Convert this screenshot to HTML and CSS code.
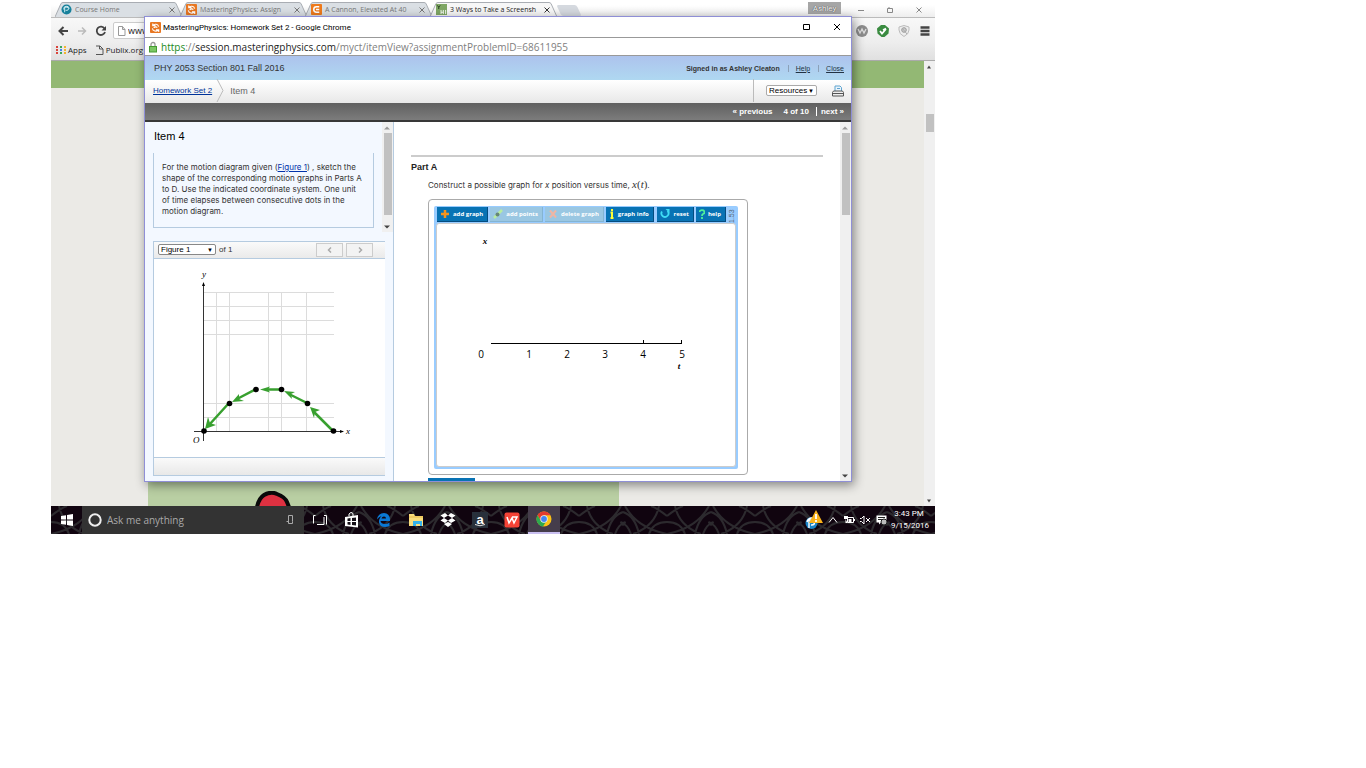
FILE: index.html
```html
<!DOCTYPE html>
<html lang="en">
<head>
<meta charset="utf-8">
<title>MasteringPhysics: Homework Set 2</title>
<link rel="stylesheet" href="styles.css">
</head>
<body>
<main class="desktop">
  <div class="stage">
    <section class="browser" aria-label="Browser">
      <header class="tabstrip">
        <div class="tabs">
          <div class="tab">
            <svg class="tab-shape" viewBox="0 0 127 15" preserveAspectRatio="none"><path d="M0 15 6 1.5Q7 .5 8 .5H119Q120 .5 121 1.5L127 15"/></svg>
            <svg class="fav" viewBox="0 0 12 12"><circle cx="6" cy="6" r="5.500" fill="#16809b"/><path d="M4 9V3.500h2.500a1.700 1.700 0 0 1 0 3.400H5M3 6a3 3 0 0 1 6-1" fill="none" stroke="#d8f1f5"/></svg>
            <span class="tab-title">Course Home</span><button class="x" aria-label="Close tab"><svg viewBox="0 0 6 6"><path d="m.5.500 5 5m0-5-5 5"/></svg></button>
          </div>
          <div class="tab">
            <svg class="tab-shape" viewBox="0 0 127 15" preserveAspectRatio="none"><path d="M0 15 6 1.500Q7 .5 8 .5H119Q120 .5 121 1.500L127 15"/></svg>
            <svg class="fav" viewBox="0 0 12 12"><rect width="12" height="12" rx="1" fill="#e87722"/><path d="M9.500 5A3.700 3.700 0 0 0 3 4M2.500 7A3.700 3.700 0 0 0 9 8.500M3 1.500V4h3M9.500 11V8.500h-3M4 6.500q2-2 4-.500" fill="none" stroke="#fff" stroke-width="1.200"/></svg>
            <span class="tab-title">MasteringPhysics: Assign</span><button class="x" aria-label="Close tab"><svg viewBox="0 0 6 6"><path d="m.5.500 5 5m0-5-5 5"/></svg></button>
          </div>
          <div class="tab">
            <svg class="tab-shape" viewBox="0 0 127 15" preserveAspectRatio="none"><path d="M0 15 6 1.500Q7 .5 8 .5H119Q120 .5 121 1.500L127 15"/></svg>
            <svg class="fav" viewBox="0 0 12 12"><rect width="12" height="12" rx="1" fill="#ee7a1c"/><path d="M9 3H6a3 3 0 0 0 0 6h3M5.500 6H9" fill="none" stroke="#fff" stroke-width="1.600"/></svg>
            <span class="tab-title">A Cannon, Elevated At 40</span><button class="x" aria-label="Close tab"><svg viewBox="0 0 6 6"><path d="m.5.500 5 5m0-5-5 5"/></svg></button>
          </div>
          <div class="tab active">
            <svg class="tab-shape" viewBox="0 0 127 15" preserveAspectRatio="none"><path d="M0 15 6 1.500Q7 .5 8 .5H119Q120 .5 121 1.500L127 15"/></svg>
            <svg class="fav" viewBox="0 0 12 12"><rect width="12" height="12" fill="#7fa765"/><path d="m1.500 1.500 1.500 2v2m1.500-4L3 3.500" stroke="#20351a" fill="none"/><path d="M5.500 11V6.500m2.500 4.500V6.500M5.500 9H8m2.500 2V6.500" stroke="#fff" fill="none"/></svg>
            <span class="tab-title">3 Ways to Take a Screensh</span><button class="x" aria-label="Close tab"><svg viewBox="0 0 6 6"><path d="m.5.500 5 5m0-5-5 5"/></svg></button>
          </div>
          <button class="newtab" aria-label="New tab"></button>
        </div>
        <button class="profile">Ashley</button>
        <div class="winbtns">
          <button aria-label="Minimize"><svg viewBox="0 0 8 8"><path d="M1 4.500h6"/></svg></button>
          <button aria-label="Restore"><svg viewBox="0 0 8 8"><path d="M1.500 2.500h5v4h-5zM3 1v1"/></svg></button>
          <button aria-label="Close"><svg viewBox="0 0 8 8"><path d="m1.500 1.500 5 5m0-5-5 5"/></svg></button>
        </div>
      </header>
      <nav class="toolbar">
        <button aria-label="Back"><svg viewBox="0 0 12 12"><path d="M11 6H3m3.500-4L2.500 6l4 4" fill="none" stroke="#444" stroke-width="2"/></svg></button>
        <button aria-label="Forward"><svg viewBox="0 0 12 12"><path d="M2 6h7M6 2.500 9.500 6 6 9.500" fill="none" stroke="#bbb" stroke-width="1.500"/></svg></button>
        <button aria-label="Reload"><svg viewBox="0 0 12 12"><path d="M9.500 3.500A4.200 4.200 0 1 0 10 7" fill="none" stroke="#444" stroke-width="1.800"/><path d="M11 1v4.500H6.500z" fill="#444"/></svg></button>
        <label class="omnibox"><svg viewBox="0 0 9 12"><path d="M1.500 1.500h4l2.500 3v6H1.500zM5.500 1.500v3H8" fill="#fff" stroke="#999"/></svg><input type="text" value="www.wikihow.com" aria-label="Address"></label>
        <button aria-label="Extension W"><svg viewBox="0 0 12 12"><circle cx="6" cy="6" r="6" fill="#8c8c8c"/><path d="m2 4 2 4 2-4 2 4 2-4" fill="none" stroke="#ddd" stroke-width="1.300"/></svg></button>
        <button aria-label="Site safety"><svg viewBox="0 0 12 12"><path d="M4 0h4l4 3.500-.5 5L7.500 12h-3L.5 8.500 0 3.500z" fill="#3a8b40"/><path d="m3 6 2 2.500L9 4M6 5l3-1.500" fill="none" stroke="#fff" stroke-width="1.800"/></svg></button>
        <button aria-label="Shield"><svg viewBox="0 0 12 12"><path d="M6 .5 11 2v3q0 4-5 6.500Q1 9 1 5V2z" fill="#eee" stroke="#bbb"/><circle cx="6" cy="5" r="2.300" fill="#ccc" stroke="#999"/><path d="m4 3 5 6" stroke="#aaa"/></svg></button>
        <button aria-label="Menu"><svg viewBox="0 0 12 12"><path d="M1.500 2.500h9m-9 3.500h9m-9 3.500h9" stroke="#444" stroke-width="2.300"/></svg></button>
      </nav>
      <nav class="bookmarks">
        <a href="#"><svg viewBox="0 0 10 10"><path d="M0 1h2v2H0zm0 3h2v2H0zm0 3h2v2H0z" fill="#d9443b"/><path d="M4 1h2v2H4zm0 6h2v2H4z" fill="#3aa757"/><path d="M4 4h2v2H4z" fill="#4285f4"/><path d="M8 1h2v2H8zm0 3h2v2H8zm0 3h2v2H8z" fill="#f4b32f"/></svg>Apps</a>
        <a href="#"><svg viewBox="0 0 10 10"><path d="M2 1h4l3 3v5.500H2M5.500 1v3H9" fill="none" stroke="#555"/></svg>Publix.org</a>
      </nav>
      <div class="page">
        <div class="page-body">
          <div class="band"></div>
          <div class="article"><svg viewBox="0 0 36 15"><path d="M2 16Q4 7 9 4q7-4 13-1 8 3 10 8l2 5" fill="#de3141" stroke="#0a0a0a" stroke-width="4"/></svg></div>
        </div>
        <div class="sbar tall"><svg class="up" viewBox="0 0 10 10"><path d="m3 7 2-3 2 3z"/></svg><i></i><svg viewBox="0 0 10 10"><path d="m3 4 2 3 2-3z"/></svg></div>
      </div>
    </section>

    <section class="popup" aria-label="MasteringPhysics">
      <header class="titlebar">
        <svg class="fav" viewBox="0 0 12 12"><rect width="12" height="12" rx="1" fill="#e87722"/><path d="M9.500 5A3.700 3.700 0 0 0 3 4M2.500 7A3.700 3.700 0 0 0 9 8.500M3 1.500V4h3M9.500 11V8.500h-3M4 6.500q2-2 4-.500" fill="none" stroke="#fff" stroke-width="1.200"/></svg>
        <h1>MasteringPhysics: Homework Set 2 - Google Chrome</h1>
        <button aria-label="Maximize"><svg viewBox="0 0 8 8"><path d="M.5 1.500h6v5h-6z"/></svg></button>
        <button aria-label="Close"><svg viewBox="0 0 8 8"><path d="m1 1 6 6m0-6L1 7"/></svg></button>
      </header>
      <div class="urlbar">
        <svg viewBox="0 0 8 12"><path d="M2 6V3.500a2 2 0 0 1 4 0V6" fill="none" stroke="#999" stroke-width="1.300"/><rect x=".5" y="5.500" width="7" height="5.500" fill="#7cc764" stroke="#459b32"/></svg>
        <span><b>https</b>://<em>session.masteringphysics.com</em>/myct/itemView?assignmentProblemID=68611955</span>
      </div>
      <div class="course">
        <span class="course-name">PHY 2053 Section 801 Fall 2016</span>
        <span class="user">Signed in as Ashley Cleaton</span><a href="#">Help</a><a href="#">Close</a>
      </div>
      <nav class="crumbs">
        <a href="#">Homework Set 2</a>
        <svg viewBox="0 0 8 23" class="chev"><path d="M1 0 7 11.500 1 23"/></svg>
        <span class="here">Item 4</span>
        <div class="tools">
          <span class="pick"><select aria-label="Resources"><option>Resources</option></select></span>
          <button aria-label="Print"><svg viewBox="0 0 12 12"><path d="M3 6V1h5l1.500 1.500V6" fill="#e9f4fc" stroke="#5fa4cf"/><path d="M5 3.500h3" stroke="#5fa4cf"/><path d="M1.500 6h9l1 1.500V11H.5V7.500z" fill="#eee" stroke="#555"/><path d="M.5 8.500h11" stroke="#555"/></svg></button>
        </div>
      </nav>
      <nav class="pager"><a href="#">« previous</a><span>4 of 10</span><a href="#" class="next">next »</a></nav>
      <div class="content">
        <aside class="side">
          <div class="problem">
            <div class="problem-text">
              <h2>Item 4</h2>
              <p>For the motion diagram given (<a href="#fig">Figure 1</a>) , sketch the<br>shape of the corresponding motion graphs in Parts A<br>to D. Use the indicated coordinate system. One unit<br>of time elapses between consecutive dots in the<br>motion diagram.</p>
            </div>
            <div class="sbar"><svg class="up" viewBox="0 0 10 10"><path d="m2 7 3-3 3 3z"/></svg><i></i><svg viewBox="0 0 10 10"><path d="m2 4 3 3 3-3z"/></svg></div>
          </div>
          <div class="figure" id="fig">
            <div class="figbar">
              <span class="pick fig"><select id="figsel"><option>Figure 1</option></select></span><label for="figsel">of 1</label>
              <div class="fignav"><button aria-label="Previous figure"><svg viewBox="0 0 6 6"><path d="M4 .5 1.500 3 4 5.500"/></svg></button><button aria-label="Next figure"><svg viewBox="0 0 6 6"><path d="M2 .5 4.500 3 2 5.500"/></svg></button></div>
            </div>
            <svg class="diagram" viewBox="154 259 231 198">
              <path d="M204 292.500h130M204 306.500h130M204 320.500h130M204 334.500h130M204 403.500h130M204 417.500h130M216.500 292v139M229.500 292v139M268.500 292v139M281.500 292v139M306.500 292v139" stroke="#dcdcdc" fill="none"/>
              <path d="M203.500 441V285M194 431.500h147" stroke="#333" fill="none"/>
              <path d="m202 286 1.500-4 1.500 4zM340 430l4 1.500-4 1.500z"/>
              <g stroke="#38a02f" stroke-width="2.500" fill="none"><path d="m229 403-20 22M256 389l-19 10M281 389.500h-15M307 403l-18-9M333 431l-19-19"/></g>
              <g fill="#38a02f"><path d="m205 429 3-12 2 6 6 2zM232 402l7-8v5l5 2zM260 389.500l10-3-2 3 2 3zM284 391l11 1-4 2 1 5zM310 407l10 3-5 2-1 6z"/></g>
              <circle cx="204" cy="431" r="2.800"/><circle cx="229.500" cy="403.500" r="2.800"/><circle cx="256" cy="389.500" r="2.800"/><circle cx="281.500" cy="389.500" r="2.800"/><circle cx="307.500" cy="403.500" r="2.800"/><circle cx="333.500" cy="431" r="2.800"/>
              <text x="202" y="277">y</text><text x="346" y="434">x</text><text x="193" y="443">O</text>
            </svg>
            <div class="figfoot"></div>
          </div>
        </aside>
        <article class="work">
          <div class="part">
            <h2>Part A</h2>
            <p>Construct a possible graph for <i>x</i> position versus time, <i class="math">x</i><span class="math">(</span><i class="math">t</i><span class="math">)</span>.</p>
            <div class="frame">
              <div class="applet">
                <div class="appbar">
                  <button><svg viewBox="0 0 10 12"><path d="M5 2v8M1 6h8" stroke="#f7941d" stroke-width="2.500"/></svg>add graph</button>
                  <button class="off" disabled><svg viewBox="0 0 10 12"><path d="m1 10 8-8" stroke="#b8eda0" stroke-width="2.500"/><circle cx="4.500" cy="6.500" r="2" fill="#687"/></svg>add points</button>
                  <button class="off" disabled><svg viewBox="0 0 10 12"><path d="m2 2.500 6 7m0-7-6 7" stroke="#efb5a4" stroke-width="2"/></svg>delete graph</button>
                  <button><svg class="slim" viewBox="0 0 6 12"><path d="M3 1v2M1.500 4.500H3v5m-1.500.500h3" stroke="#ff3" stroke-width="2" fill="none"/></svg>graph info</button>
                  <button class="reset"><svg viewBox="0 0 10 12"><path d="M2 3.500A3.500 3.500 0 1 0 7.500 3" stroke="#3fdcf5" stroke-width="1.800" fill="none"/><path d="M5.500 1h4v4z" fill="#3fdcf5"/></svg>reset</button>
                  <button><svg class="slim" viewBox="0 0 6 12"><path d="M.5 4a2.500 2 0 1 1 3.500 2q-1 .5-1 2M3 9v2" stroke="#4ff09a" stroke-width="1.800" fill="none"/></svg>help</button>
                  <span class="ver">1.53</span>
                </div>
                <svg class="plot" viewBox="437 226 298 242">
                  <path d="M491 345.500h191M643.500 342v4M681.500 342v4" stroke="#000" fill="none"/>
                  <g text-anchor="middle"><text x="481" y="360">0</text><text x="529" y="360">1</text><text x="567" y="360">2</text><text x="605" y="360">3</text><text x="643" y="360">4</text><text x="682" y="360">5</text><text class="var" x="679" y="371">t</text><text class="var" x="485" y="246">x</text></g>
                </svg>
              </div>
            </div>
            <button class="submit" aria-label="Submit"></button>
          </div>
          <div class="sbar"><svg class="up" viewBox="0 0 10 10"><path d="m2 7 3-3 3 3z"/></svg><i></i><svg viewBox="0 0 10 10"><path d="m2 4 3 3 3-3z"/></svg></div>
        </article>
      </div>
    </section>
  </div>

  <footer class="taskbar">
    <svg class="lace" aria-hidden="true"><defs><pattern id="lace" width="88" height="28" patternUnits="userSpaceOnUse"><path d="M0 28Q30 22 42 0M88 28Q58 22 46 0M8 0q4 20 26 28M80 0Q76 20 54 28M44 6q-12 4-16 22M44 6q12 4 16 22M0 10q10-8 16-10M88 10Q78 2 72 0M0 16q14 0 18 12M88 16q-14 0-18 12M36 28q8-20 16 0" fill="none" stroke="#2c2a2e" stroke-width="2"/><path d="m44 20-3-3q0-3 3-1 3-2 3 1z" fill="#2c2a2e"/></pattern></defs><rect width="100%" height="100%" fill="url(#lace)"/></svg>
    <button class="start" aria-label="Start"><svg viewBox="0 0 12 12"><path d="m0 2 5-.8v4.300H0zm6-1 6-1v5.500H6zM0 6.500h5v4.300L0 10zm6 0h6V12l-6-1z" fill="#fff"/></svg></button>
    <label class="search"><svg viewBox="0 0 14 14"><circle cx="7" cy="7" r="5.700" fill="none" stroke="#eee" stroke-width="2"/></svg><input type="text" placeholder="Ask me anything" aria-label="Search"><svg class="mic" viewBox="0 0 8 12"><path d="M2.500 8V1.500h4v6M.5 7.500h2v2h4v-2" fill="none" stroke="#aaa"/></svg></label>
    <div class="apps">
      <button aria-label="Task view"><svg viewBox="0 0 16 16"><path d="M3.500 3.500h-2v8M5 12.500h7V5M12 3.500h2.500v9" fill="none" stroke="#fff"/></svg></button>
      <button aria-label="Store"><svg viewBox="0 0 16 16"><path d="m1 5 13-2v12.500L1 14z" fill="#fff"/><path d="M5 4V2q2-3 4-.500V4" stroke="#fff" fill="none"/><path d="m3.500 6.500 3-.500v3h-3zM8 6l4-.500V9H8zM3.500 10h3v3l-3-.500zM8 10h4v3.500L8 13z" fill="#151018"/></svg></button>
      <button aria-label="Edge"><svg viewBox="0 0 16 16"><path d="M4.500 9H14V7.500Q13.500 1 8 1 2 1 1 7.500q2-3 4.500-3.500Q2.500 7 3 10.500 4 15 9 15q2.500 0 4.500-1v-3.500Q11.500 12 9 12q-4 0-4.500-3zM5.500 6.500Q6 4.500 8 4.500t2 2z" fill="#0a78d4" fill-rule="evenodd"/></svg></button>
      <button aria-label="File Explorer"><svg viewBox="0 0 16 16"><path d="M1 2h5l1 2h8v10H1z" fill="#f9dc7b"/><path d="M1 5h14" stroke="#e7b94a"/><path d="M5 14V9h9v5h-2v-2H8v2z" fill="#35b1e8"/></svg></button>
      <button aria-label="Dropbox"><svg viewBox="0 0 16 16"><path d="m5 1 3 2.500L4 6 .5 3.500zM11 1l4.500 2.500L12 6 8 3.500zM4 6l4 2.500L5 11 .5 8.500zM12 6l3.500 2.500L11 11 8 8.500zM8 10l4 2-4 3-4-3z" fill="#fff"/></svg></button>
      <button aria-label="Amazon"><svg viewBox="0 0 16 16"><rect width="16" height="16" fill="#28303b"/><text x="8" y="12" text-anchor="middle" class="a">a</text><path d="M3 12.500q5 2.500 10 0" stroke="#ddd" fill="none"/></svg></button>
      <button aria-label="WPS Writer"><svg viewBox="0 0 16 16"><rect x=".5" y=".5" width="15" height="15" rx="2" fill="#f44336"/><path d="m3 5 2 6 3-5 2 5 3-6H8" fill="none" stroke="#fff" stroke-width="1.500"/></svg></button>
      <button class="on" aria-label="Chrome"><svg viewBox="0 0 16 16"><circle cx="8" cy="8" r="7.500" fill="#fbc116"/><path d="M1.500 4.200A7.500 7.500 0 0 1 14.500 4.200H8L5 10z" fill="#e33b2e"/><path d="M1.500 4.200A7.500 7.500 0 0 0 7 15.500L10.500 10 5 10z" fill="#2da94f"/><circle cx="8" cy="8" r="3.700" fill="#eee"/><circle cx="8" cy="8" r="2.900" fill="#4285f4"/></svg></button>
    </div>
    <div class="tray">
      <svg class="big" viewBox="0 0 18 20"><circle cx="6.500" cy="13" r="6" fill="#1a84c7"/><path d="M4 18v-8h3a2.500 2.500 0 0 1 0 5H6M2 12q1-4 5-4" stroke="#fff" fill="none" stroke-width="1.400"/><path d="m11 0 7 13H4z" fill="#f9b21b"/><path d="M11 4v5m0 1v2" stroke="#fff" stroke-width="1.800"/></svg>
      <svg viewBox="0 0 12 12"><path d="m2 8.500 4-5 4 5" fill="none" stroke="#fff"/></svg>
      <svg viewBox="0 0 12 12"><path d="M4.500 3.500h6v5h-6zM11.500 5v2" fill="none" stroke="#fff"/><path d="M5.500 5h3v3h-3zM1 2h4v3H1zM2.500 5v4h2" fill="#fff"/></svg>
      <svg viewBox="0 0 12 12"><path d="M1 4.500h1.500L5 2v8L2.500 7.500H1M7 4l4 4m0-4L7 8" fill="none" stroke="#fff"/></svg>
      <svg viewBox="0 0 12 12"><path d="M1.500 1.500h10v7H6L4 10.500v-2H1.500z" fill="#fff"/><path d="M3 3.500h7M3 5.500h4" stroke="#222"/><circle cx="9" cy="8" r="3" fill="#bbb" stroke="#222"/></svg>
      <time>3:43 PM<br>9/15/2016</time>
    </div>
  </footer>
</main>
</body>
</html>
```
FILE: styles.css
```css
* { box-sizing: border-box; }
body { margin: 0; background: #fff; font-family: "Liberation Sans", Arial, sans-serif; font-size: 8px; color: #333; }
button { margin: 0; padding: 0; border: 0; background: none; font: inherit; color: inherit; }
input, select { font: inherit; color: inherit; border: 0; padding: 0; margin: 0; background: none; appearance: none; min-width: 0; }
h1, h2, p { margin: 0; font-weight: normal; }
svg { display: block; flex: none; }

.desktop { margin: 0 431px 0 51px; }
.stage { display: grid; overflow: hidden; }
.stage > * { grid-area: 1 / 1; min-width: 0; }

/* Background browser */
.browser { display: flex; flex-direction: column; font-family: Roboto, "Open Sans", sans-serif; }
.tabstrip { display: flex; align-items: flex-end; height: 18px; background: linear-gradient(#fff 30%, #eee); border-bottom: 1px solid #bbb; }
.tabs { display: flex; flex: 1; padding-left: 4px; }
.tab { position: relative; display: flex; align-items: center; gap: 3px; width: 125px; height: 15px; padding: 0 5px 0 6px; font: 7px "Open Sans", sans-serif; color: #777; }
.tab-shape { position: absolute; inset: 0; width: 127px; height: 15px; fill: #dadfe4; stroke: #a9adb3; }
.tab > *:not(.tab-shape) { position: relative; }
.active { color: #222; }
.active .tab-shape { fill: #f7f7f7; }
.fav { width: 11px; height: 11px; }
.tab-title { flex: 1; white-space: nowrap; }
.x svg { width: 6px; height: 6px; stroke: #777; }
.active .x svg { stroke: #333; }
.newtab { width: 20px; height: 11px; margin: 3px 0 0 4px; background: #d5d9df; transform: skewX(25deg); border-radius: 2px; }
.profile { width: 33px; height: 12px; margin-bottom: 3px; background: #a6a6a6; color: #fff; text-shadow: 0 0 1px #000; }
.winbtns { display: flex; align-self: center; padding: 3px 2px 0 5px; }
.winbtns button { display: grid; place-items: center; width: 29px; }
.winbtns svg { width: 8px; height: 8px; fill: none; stroke: #888; }
.toolbar { display: flex; align-items: center; gap: 6px; height: 25px; padding: 0 3px 0 5px; background: linear-gradient(#f8f8f8, #ededed); }
.toolbar svg { width: 12px; height: 12px; }
.toolbar button { display: grid; place-items: center; width: 13px; }
.toolbar .omnibox ~ button { width: 15px; }
.omnibox { display: flex; flex: 1; align-items: center; gap: 2px; height: 17px; padding-left: 3px; background: #fff; border: 1px solid #ccc; border-radius: 2px; font: 9px "Open Sans", sans-serif; color: #222; }
.toolbar .omnibox svg { width: 9px; }
.omnibox input { flex: 1; }
.bookmarks { display: flex; gap: 7px; height: 18px; padding: 0 5px 4px; background: linear-gradient(#ededed, #e0e0e0); border-bottom: 1px solid #aaa; font-family: "Open Sans", sans-serif; }
.bookmarks a { display: flex; align-items: center; gap: 2px; color: #222; text-decoration: none; }
.bookmarks svg { width: 10px; height: 10px; }
.page { display: flex; flex: 1; }
.page-body { display: flex; flex: 1; flex-direction: column; justify-content: space-between; background: #ebeae6; }
.band { height: 27px; background: #93b874; }
.article { width: 54%; height: 27px; margin-left: 97px; padding: 12px 0 0 107px; background: #b9cfa3; }
.article svg { width: 36px; height: 15px; }

/* Scroll bars */
.sbar { display: flex; flex: none; flex-direction: column; width: 11px; background: #f0f0f0; }
.sbar svg { width: 10px; height: 11px; fill: #444; }
.sbar .up { fill: #999; }
.sbar i { width: 8px; height: 82px; margin: 0 auto; background: #c1c1c1; }
.sbar svg:last-child { margin-top: auto; }
.tall i { height: 18px; margin-top: 42px; }
.tall .up { fill: #444; }

/* Popup window */
.popup { position: relative; display: flex; flex-direction: column; margin: 16px 83px 24px 93px; border: 1px solid #8f8fd6; background: #fff; box-shadow: 2px 3px 10px rgba(0, 0, 0, .45); }
.titlebar { display: flex; align-items: center; gap: 2px; height: 20px; padding: 0 10px 0 5px; font-family: Roboto, sans-serif; color: #000; }
.titlebar h1 { flex: 1; font-size: 8px; }
.titlebar button { margin-left: 20px; }
.titlebar button svg { width: 8px; height: 8px; fill: none; stroke: #000; }
.urlbar { display: flex; align-items: center; gap: 4px; height: 19px; padding-left: 4px; border: solid #999; border-width: 1px 0; font-family: "Open Sans", sans-serif; font-size: 10px; color: #808080; white-space: nowrap; }
.urlbar svg { width: 8px; height: 12px; }
.urlbar b { font-weight: normal; color: #1a8a1a; }
.urlbar em { font-style: normal; color: #222; }
.course { display: flex; align-items: center; height: 24px; padding: 0 7px 0 9px; background: linear-gradient(#adc3ed, #afd8f1); font-size: 7px; }
.course-name { flex: 1; font-size: 9px; }
.course .user { font-weight: bold; }
.course a { margin-left: 8px; padding-left: 7px; border-left: 1px solid #8ba0b8; color: #234; }
.crumbs { display: flex; align-items: center; height: 23px; padding: 0 0 2px 8px; background: linear-gradient(#fff, #e8e8e8); }
.crumbs > a { color: #003399; }
.chev { width: 8px; height: 23px; margin: 0 6px 0 4px; fill: none; stroke: #bbb; }
.here { flex: 1; font-size: 9px; color: #666; }
.tools { display: flex; align-items: center; gap: 15px; height: 23px; padding: 0 7px 0 12px; border-left: 1px solid #bbb; }
.tools svg { width: 12px; height: 12px; }
.pick { display: grid; align-items: center; width: 51px; height: 11px; border: 1px solid #aaa; border-radius: 2px; background: #fff; color: #000; }
.pick > *, .pick::after { grid-area: 1 / 1; }
.pick select { padding-left: 2px; line-height: 9px; }
.pick::after { content: "▼"; justify-self: end; padding-right: 2px; font-size: 6px; pointer-events: none; }
.pager { display: flex; align-items: center; justify-content: flex-end; gap: 11px; height: 19px; padding-right: 7px; background: linear-gradient(#606060, #7c7c7c); border-bottom: 2px solid #383838; font-weight: bold; color: #fff; }
.pager a { color: #fff; text-decoration: none; }
.pager .next { margin-left: -4px; padding-left: 4px; border-left: 1px solid #fff; }
.content { display: flex; }

/* Left panel */
.side { flex: none; width: 249px; padding-bottom: 4px; background: #f3f8ff; border-right: 1px solid #b5cbe0; }
.problem { display: flex; }
.problem-text { flex: 1; padding: 8px 8px 4px; }
.problem h2 { padding-left: 1px; font-size: 11px; line-height: 12px; color: #000; }
.problem p { margin-top: 11px; padding: 9px 0 10px 8px; border: 1px solid #b5cbe0; border-top: 0; font-family: Inter, "Liberation Sans", sans-serif; line-height: 11px; white-space: nowrap; }
.problem p a { color: #0033aa; }
.figure { margin: 9px 8px 0; border: 1px solid #b5cbe0; border-right: 0; background: #fff; }
.figbar { display: flex; align-items: center; height: 17px; padding: 0 12px 1px 4px; background: linear-gradient(#fafafa, #eaeaea); border-bottom: 1px solid #b5cbe0; }
.pick.fig { width: 58px; margin-right: 3px; border-color: #888; }
.fignav { display: flex; gap: 3px; margin-left: auto; }
.fignav button { display: grid; place-items: center; width: 27px; height: 14px; border: 1px solid #ccc; background: #f3f3f3; }
.fignav svg { width: 6px; height: 6px; fill: none; stroke: #aaa; stroke-width: 1.5; }
.diagram { width: 231px; height: 198px; font: italic 9px "Liberation Serif", serif; }
.figfoot { height: 18px; background: linear-gradient(#fafafa, #e8e8e8); border-top: 1px solid #b5cbe0; }

/* Work area */
.work { display: flex; flex: 1; min-width: 0; }
.part { flex: 1; padding: 33px 17px 0; }
.part h2 { padding-top: 5px; border-top: 2px solid #ccc; font-size: 9px; font-weight: bold; line-height: 10px; color: #222; }
.part p { margin: 7px 0 8px 17px; font-family: Inter, "Liberation Sans", sans-serif; line-height: 12px; white-space: nowrap; }
.math { font-family: "Liberation Serif", serif; font-size: 11px; line-height: 10px; }
.frame { width: 320px; margin-left: 17px; padding: 6px 9px 5px 5px; border: 1px solid #aaa; border-radius: 4px; }
.applet { padding: 1px 2px 2px; background: #99ccff; border-radius: 2px; }
.appbar { display: flex; gap: 2px; height: 16px; padding-left: 1px; font: bold 6px "Open Sans", sans-serif; color: #fff; }
.appbar button { display: flex; align-items: center; gap: 3px; height: 15px; padding: 0 4px 0 3px; background: #0873b4; border: solid #044c80; border-width: 0 1px 1px 0; white-space: nowrap; }
.appbar button svg { width: 10px; height: 12px; }
.appbar button .slim { width: 6px; }
.appbar .off { background: #9ac7e2; border-color: #84b4d2; }
.appbar .reset { margin-left: auto; }
.ver { width: 8px; writing-mode: vertical-rl; transform: rotate(180deg); font: 7px "Liberation Sans", sans-serif; color: #567; }
.plot { width: 100%; height: auto; background: #fff; border: 1px solid #ccc; border-radius: 3px; font: 10px "Open Sans", sans-serif; }
.plot .var { font: italic bold 9px "Liberation Serif", serif; }
.submit { display: block; width: 47px; height: 3px; margin: 3px 0 0 17px; background: #0873b4; }

/* Taskbar */
.taskbar { position: relative; display: flex; align-items: stretch; height: 28px; background: #10040f; color: #fff; font-family: "Open Sans", sans-serif; }
.taskbar > * { position: relative; }
.taskbar > .lace { position: absolute; inset: 0; width: 100%; height: 100%; }
.taskbar button { display: grid; place-items: center; width: 32px; }
.taskbar .start { width: 31px; }
.taskbar .start svg { width: 12px; height: 12px; }
.search { display: flex; align-items: center; gap: 5px; width: 222px; padding: 0 10px 0 6px; background: #333; font-size: 10px; }
.search svg { width: 14px; height: 14px; }
.search input { flex: 1; }
.search input::placeholder { color: #aaa; opacity: 1; }
.search .mic { width: 8px; height: 12px; }
.apps { display: flex; flex: 1; }
.apps svg { width: 16px; height: 16px; }
.apps .on { background: #453d4b; border-bottom: 2px solid #c9bff0; }
.a { font: bold 13px "Liberation Sans", sans-serif; fill: #fff; }
.tray { display: flex; align-items: center; gap: 4px; padding-right: 8px; }
.tray svg { width: 12px; height: 12px; }
.tray .big { width: 18px; height: 20px; }
.tray time { width: 36px; text-align: center; line-height: 12px; white-space: nowrap; font-family: Roboto, sans-serif; }
```
